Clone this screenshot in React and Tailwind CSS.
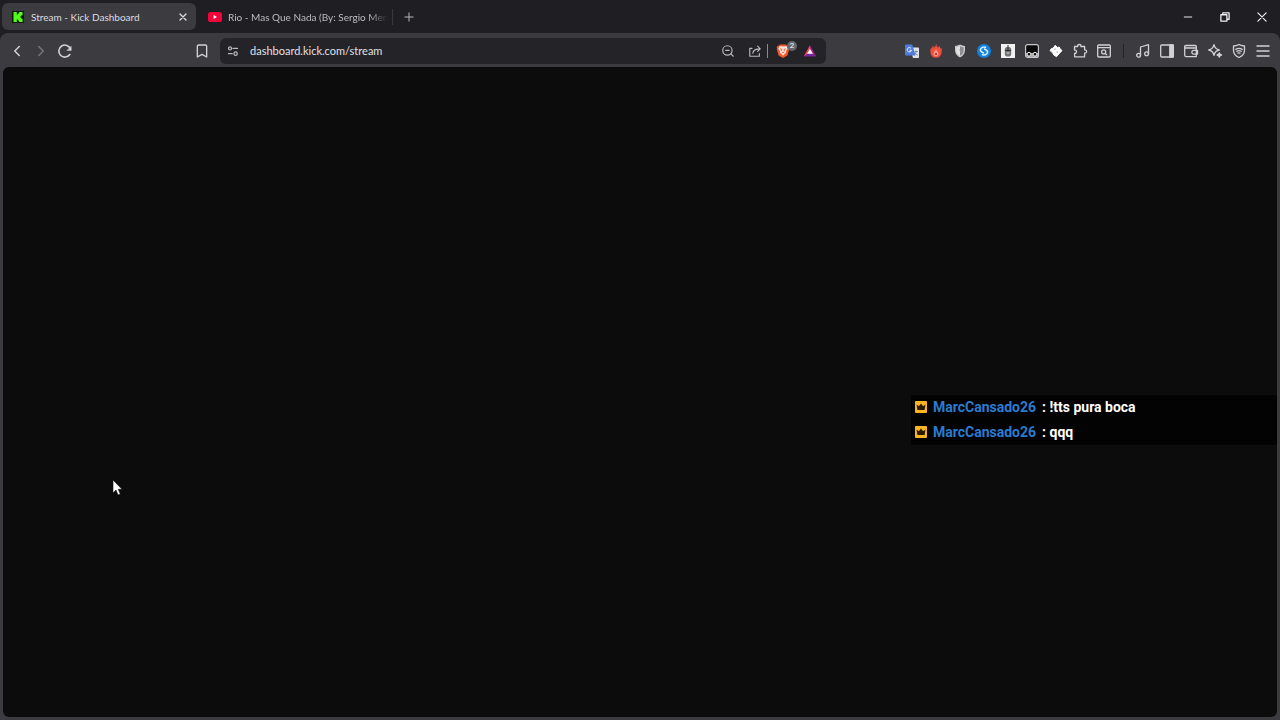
import React from 'react';
import { Bookmark, ChevronLeft, ChevronRight, ZoomOut } from 'lucide-react';

function Glyph({ children, className = 'size-4', ...rest }) {
  return (
    <svg viewBox="0 0 16 16" fill="none" stroke="currentColor" strokeWidth="1.3" strokeLinecap="round" strokeLinejoin="round" aria-hidden="true" className={className} {...rest}>
      {children}
    </svg>
  );
}

function ToolButton({ label, children, className = 'text-[#d2d1d5]' }) {
  return (
    <button type="button" aria-label={label} className={`flex h-6 w-6 shrink-0 items-center justify-center ${className}`}>
      {children}
    </button>
  );
}

const KickIcon = () => (
  <svg viewBox="0 0 12 12" className="size-3 shrink-0" aria-hidden="true">
    <rect width="12" height="12" fill="#0b1a08" />
    <path d="M1.5 1h3.3v2.6h1.1V2.4H7V1h3.6v3.3H9.3v1.1H8.2v1.2h1.1v1.1h1.3V11H7V9.6H5.9V8.4H4.8V11H1.5z" fill="#53fc18" />
  </svg>
);

const YouTubeIcon = () => (
  <svg viewBox="0 0 14 10" className="h-2.5 w-3.5 shrink-0" aria-hidden="true">
    <rect width="14" height="10" rx="2.6" fill="#f0063a" />
    <path d="M5.6 3v4L9 5z" fill="#fff" />
  </svg>
);

const extensions = [
  {
    label: 'Translate',
    icon: (
      <svg viewBox="0 0 16 16" className="size-4">
        <path d="M6 4.500h8.200q.8 0 .8.8v8.900q0 .8-.8.8H9z" fill="#dfe1e8" />
        <path d="M1.800 1.500h6.400l3.400 11H1.800q-.8 0-.8-.8V2.300q0-.8.8-.8z" fill="#4e7bdc" />
        <path d="M7 5.300A2.200 2.200 0 1 0 7.500 7.200H5.500" stroke="#e8eefc" strokeWidth="1" fill="none" />
        <path d="M10.600 8.500H14M12.200 7.500v1q-.5 2-1.400 3M11 9.700q1 1.800 2.600 2.400" stroke="#6d7b93" strokeWidth=".8" fill="none" />
      </svg>
    ),
  },
  {
    label: 'Flame',
    icon: (
      <svg viewBox="0 0 16 16" className="size-4">
        <path d="M8.300.8q0 2.500 1.800 4 1-.8.800-2.600 1.500 1.600 1.400 3.600.7-.3.900-1.300Q14.500 7 13.500 10.500 12.300 14.700 8 14.800 3.700 14.700 2.500 10.500 1.700 7 3.200 4.600q.2 1 .9 1.300Q3.900 3.600 5.200 2.200q0 1.700.8 2.500Q8 3.300 8.300.8z" fill="#ee5039" />
        <path d="M8 6q.6 2 2 3 .9 1.100.5 2.500-.6 1.800-2.500 1.900-1.900-.1-2.500-1.900-.4-1.400.5-2.500 1.400-1 2-3z" fill="#ff9d8d" />
        <circle cx="8" cy="11" r="1.200" fill="#c83242" />
      </svg>
    ),
  },
  {
    label: 'Shield',
    icon: (
      <svg viewBox="0 0 16 16" className="size-4">
        <path d="M8 1.500q2.400 1.400 5 1.500v4.500q-.3 4.700-5 7-4.700-2.300-5-7V3q2.600-.1 5-1.500z" fill="#c8c8ca" />
        <path d="M8 3.300q1.700.9 3.500 1v3.400Q11.300 11 8 12.800z" fill="#8b8b8f" />
        <path d="M8 3.300q-1.700.9-3.500 1v3.400Q4.700 11 8 12.800z" fill="#e4e4e5" />
        <path d="M6.500 6.200 9.500 9" stroke="#a2a2a5" />
      </svg>
    ),
  },
  {
    label: 'Music recognition',
    icon: (
      <svg viewBox="0 0 16 16" className="size-4">
        <circle cx="8" cy="8" r="7" fill="#1281de" />
        <path d="M9.500 4.200Q7 3.300 5.200 5.200q-1.600 2 .1 3.500L7.500 10M6.500 11.800q2.500.9 4.300-1 1.600-2-.1-3.500L8.500 6" fill="none" stroke="#d7f0ff" strokeWidth="1.500" strokeLinecap="round" />
      </svg>
    ),
  },
  {
    label: 'Mouse tools',
    icon: (
      <svg viewBox="0 0 16 16" className="size-4">
        <rect x="1" y="1" width="14" height="14" fill="#f1f1f1" />
        <rect x="4.800" y="4" width="6.400" height="9.500" rx="2.500" fill="#747476" />
        <path d="M8 2v5.500M5 7.500h6" stroke="#2e2e30" />
        <path d="M6.500 10h3" stroke="#d0d0d0" />
      </svg>
    ),
  },
  {
    label: 'Scripts',
    icon: (
      <svg viewBox="0 0 16 16" className="size-4">
        <rect x="1.600" y="1.600" width="12.800" height="12.800" rx="2" fill="#09090a" stroke="#c8c8ca" strokeWidth="1.200" />
        <path d="M2 10h12v4H2z" fill="#a8a8aa" />
        <circle cx="5" cy="11.200" r="1.900" fill="#151516" stroke="#f1f1f1" />
        <circle cx="11" cy="11.200" r="1.900" fill="#151516" stroke="#f1f1f1" />
      </svg>
    ),
  },
  {
    label: 'Diamond',
    icon: (
      <svg viewBox="0 0 16 16" className="size-4">
        <path d="m7.200 2.300 2.300 2.200 1.600-.5 1.100 1.700 1.800 2-1.800 1.700L8.500 13.700 5.800 12l-1-2L2 7.500l1.500-2 1.600-.2z" fill="#fff" stroke="#fff" strokeLinejoin="round" />
        <circle cx="7" cy="6.300" r=".7" fill="#99999e" />
        <circle cx="9.200" cy="9" r=".7" fill="#99999e" />
      </svg>
    ),
  },
  {
    label: 'Extensions',
    icon: (
      <Glyph>
        <path d="M2.500 3.500h3.200q-.3-2 1.600-2t1.600 2h3.700v3.400q2-.2 2 1.600t-2 1.600v3.700h-10v-3.300q1.900 0 1.900-1.800T2.500 7z" />
      </Glyph>
    ),
  },
  {
    label: 'Search tabs',
    icon: (
      <Glyph>
        <rect x="1.700" y="2" width="12.600" height="12" rx="1" />
        <path d="M2 4.700h12" />
        <circle cx="7.700" cy="8.900" r="2" />
        <path d="m9.200 10.400 1.600 1.500" />
      </Glyph>
    ),
  },
];

const browserTools = [
  { label: 'Music', icon: <Glyph><path d="M5.500 12.300V4l8-2.300v9" /><circle cx="3.600" cy="12.300" r="1.900" /><circle cx="11.600" cy="10.700" r="1.900" /></Glyph> },
  { label: 'Sidebar', icon: <Glyph><rect x="1.700" y="2" width="12.600" height="12" rx="1" /><path d="M10.800 2h3.500v12h-3.500z" fill="currentColor" /></Glyph> },
  { label: 'Wallet', icon: <Glyph><path d="M13.300 5V3.500q0-1-1-1H3q-1.300 0-1.300 1.200V12q0 1.700 1.700 1.700h9.900V5H3q-1.300 0-1.300-1.300M14.500 7.300h-4q-1.700.2-1.700 1.900t1.700 1.900h4z" /></Glyph> },
  { label: 'Assistant', icon: <Glyph><path d="M7 1.700q.9 4.400 5.300 5.300Q7.900 7.900 7 12.300 6.100 7.900 1.700 7 6.100 6.100 7 1.700z" /><path d="M12.300 9.800q.2 1.900 2.200 2.200-2 .3-2.200 2.200-.2-1.900-2.200-2.200 2-.3 2.200-2.200z" fill="currentColor" /></Glyph> },
  { label: 'VPN', icon: <Glyph><path d="M8 1.500q2.800 1.500 5.500 1.500v4.500q-.2 4.700-5.500 7-5.300-2.300-5.500-7V3Q5.200 3 8 1.500z" /><path d="M4.800 6.400Q8 4.400 11.200 6.400M5.700 8.300Q8 7 10.300 8.300M7 10.200q1-.5 2 0" /></Glyph> },
  { label: 'Menu', icon: <Glyph strokeLinecap="butt"><path d="M1.500 3h13M1.500 8h13M1.500 13h13" /></Glyph> },
];

function TitleBar() {
  return (
    <header className="flex h-[33px] items-center bg-[#1f1e23] font-['Lato','Roboto',sans-serif] text-[10px] leading-4 text-[#dddce0]">
      <div className="ml-0.5 flex h-[27px] w-[194px] shrink-0 items-center rounded-md bg-[#3c3b40] pl-2.5 pr-1">
        <a href="#stream" className="flex min-w-0 flex-1 items-center gap-[7px]">
          <KickIcon />
          <span className="truncate">Stream - Kick Dashboard</span>
        </a>
        <button type="button" aria-label="Close tab" className="flex size-[18px] items-center justify-center">
          <Glyph className="size-3" strokeWidth="1.800"><path d="m4 4 8 8M12 4l-8 8" /></Glyph>
        </button>
      </div>
      <a href="#video" className="ml-3 flex w-[174px] shrink-0 items-center gap-1.5 text-[#bdbcc1]">
        <YouTubeIcon />
        <span className="whitespace-nowrap [mask-image:linear-gradient(to_right,black_88%,transparent)]">Rio - Mas Que Nada (By: Sergio Men</span>
      </a>
      <span className="ml-2.5 h-4 w-px bg-[#38373c]" />
      <button type="button" aria-label="New tab" className="ml-1 flex size-6 items-center justify-center text-[#b9b8bd]">
        <Glyph className="size-3"><path d="M8 2.500v11M2.500 8h11" /></Glyph>
      </button>
      <div className="ml-auto flex text-[#eeeef0]">
        <button type="button" aria-label="Minimize" className="flex h-8 w-[37px] items-center justify-center">
          <Glyph className="size-3" strokeLinecap="butt"><path d="M2.500 8h11" /></Glyph>
        </button>
        <button type="button" aria-label="Restore" className="flex h-8 w-[37px] items-center justify-center">
          <Glyph className="size-3" strokeWidth="1.700"><path d="M2.500 5h8v8.500h-8zM5 5V2.500h8.500V11h-3" /></Glyph>
        </button>
        <button type="button" aria-label="Close window" className="flex h-8 w-[37px] items-center justify-center">
          <Glyph className="size-3" strokeWidth="1.600"><path d="m2.500 2.500 11 11M13.500 2.500l-11 11" /></Glyph>
        </button>
      </div>
    </header>
  );
}

function AddressBar() {
  return (
    <div className="ml-1.5 flex h-[26px] w-[606px] min-w-0 items-center rounded-md bg-[#242328] pl-1 pr-1">
      <button type="button" aria-label="Site settings" className="flex w-[18px] shrink-0 justify-center text-[#b9b8bd]">
        <Glyph className="size-3" strokeWidth="1.700"><circle cx="4" cy="4.500" r="2" /><path d="M8 4.500h6M2 11.500h5" /><circle cx="11.500" cy="11.500" r="2.200" /></Glyph>
      </button>
      <input aria-label="Address" defaultValue="dashboard.kick.com/stream" className="ml-2 min-w-0 flex-1 bg-transparent font-['Lato','Roboto',sans-serif] text-[11px] leading-4 text-[#e2e1e5] outline-none" />
      <ToolButton label="Zoom" className="text-[#b9b8bd]"><ZoomOut className="size-3.5" /></ToolButton>
      <button type="button" aria-label="Share" className="ml-[3px] flex h-6 w-6 items-center justify-center text-[#b9b8bd]">
        <Glyph className="size-3.5"><path d="M4.500 5H2v9h11v-3M5.500 10.500Q6 5.500 13.500 5.500M11 2.500l3 3-3 3" /></Glyph>
      </button>
      <span className="h-3.5 w-px bg-[#8b8a90]" />
      <button type="button" aria-label="Brave Shields" className="relative ml-[3px] flex h-6 w-6 items-center justify-center">
        <svg viewBox="0 0 16 16" className="size-4">
          <path d="M5 1.500h6l1.200 1.300 1.200-.1 1 1.900-.5 1 .3.900-1.800 6L8 15l-4.400-2.500-1.800-6 .3-.9-.5-1 1-1.900 1.200.1z" fill="#f05a2c" />
          <path d="m8 3.500 3.300-.5 1.400 2.400-1.800 2.800.2 1.600L8 12.500 4.900 9.800l.2-1.600-1.800-2.800L4.700 3z" fill="#ffe6dc" />
          <path d="m5 5.700 2 .8-.4 1.700M11 5.700l-2 .8.400 1.700M6.500 10 8 9.200 9.500 10" stroke="#ee693f" fill="none" />
        </svg>
        <span className="absolute -right-0.5 top-0.5 flex size-2.5 items-center justify-center rounded-full bg-[#64686d] font-['Roboto',sans-serif] text-[8px] leading-none text-white">2</span>
      </button>
      <div className="ml-[3px] flex">
        <ToolButton label="Rewards">
          <svg viewBox="0 0 16 16" className="size-3.5">
            <path d="M8 1.500 15 14H1z" fill="#a3207f" />
            <path d="M8 1.500 1 14l7-4z" fill="#f34751" />
            <path d="m1 14 7-4 7 4z" fill="#702aa5" />
            <path d="m8 5.500 3.300 5.500H4.700z" fill="#fff" />
          </svg>
        </ToolButton>
      </div>
    </div>
  );
}

function Toolbar() {
  return (
    <nav aria-label="Browser toolbar" className="flex h-[34px] items-center rounded-t-lg bg-[#3c3b40] px-[5px] pt-0.5">
      <ToolButton label="Back"><ChevronLeft className="size-[18px]" /></ToolButton>
      <ToolButton label="Forward" className="text-[#77767b]"><ChevronRight className="size-[18px]" /></ToolButton>
      <ToolButton label="Reload">
        <Glyph strokeWidth="1.600"><path d="M12.800 11.500A6 6 0 1 1 13.500 6" /><path d="M14.200 3.500v4h-4z" fill="currentColor" strokeWidth=".5" /></Glyph>
      </ToolButton>
      <div className="ml-[113px] flex min-w-0 flex-1 items-center">
        <ToolButton label="Bookmark"><Bookmark className="size-4" /></ToolButton>
        <AddressBar />
      </div>
      <div className="flex shrink-0 items-center">
        {extensions.map((item) => <ToolButton key={item.label} label={item.label}>{item.icon}</ToolButton>)}
        <span className="ml-[7px] mr-[7px] h-3.5 w-px bg-[#242328]" />
        {browserTools.map((item) => <ToolButton key={item.label} label={item.label}>{item.icon}</ToolButton>)}
      </div>
    </nav>
  );
}

function ChatMessage({ text }) {
  return (
    <li className="flex h-[25px] items-center bg-[#030303] pb-0.5 pl-1">
      <svg viewBox="0 0 12 12" className="mr-1.5 size-3 shrink-0" aria-hidden="true">
        <rect width="12" height="12" rx="1" fill="#fcb522" />
        <path d="m1.500 3.500 2.300 1.700L6 2.500l2.200 2.700 2.300-1.700-.9 5.500H2.400z" fill="#291b05" />
      </svg>
      <span className="text-[#2b7bd0]">MarcCansado26</span>
      <span className="ml-1.5 text-white">: {text}</span>
    </li>
  );
}

export default function App() {
  return (
    <div className="flex min-h-screen flex-col bg-[#1f1e23]">
      <TitleBar />
      <Toolbar />
      <main className="relative flex flex-1 flex-col bg-[#3c3b40] px-[3px] pb-[3px]">
        <div className="flex flex-1 flex-col rounded-md bg-[#0c0c0c]">
          <ul aria-label="Stream chat" className="ml-auto mt-[328px] w-[366px] font-['Roboto',sans-serif] text-[14px] font-bold leading-5">
            <ChatMessage text="!tts pura boca" />
            <ChatMessage text="qqq" />
          </ul>
        </div>
        <svg viewBox="0 0 12 18" className="absolute left-28 top-[412px] h-[18px] w-3" aria-hidden="true">
          <path d="M1 1v13l3-3 2 5 2.300-1-2-4.700H10z" fill="#fff" stroke="#111" strokeWidth=".6" />
        </svg>
      </main>
    </div>
  );
}
